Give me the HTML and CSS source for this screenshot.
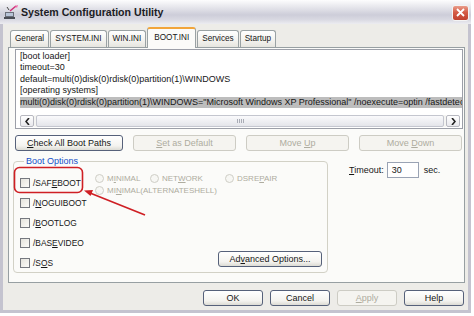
FILE: index.html
```html
<!DOCTYPE html>
<html lang="en">
<head>
  <meta charset="UTF-8">
  <title>System Configuration Utility</title>
  <link rel="stylesheet" href="styles.css">
</head>
<body>

<!-- Dialog window -->
<div class="window">
  <div class="titlebar">
    <svg class="app-icon" width="15" height="14" viewBox="0 0 15 14">
      <rect x="1" y="7" width="9" height="5" fill="#6b6f7a"/>
      <rect x="2" y="8" width="7" height="3" fill="#b8c4d8"/>
      <rect x="0" y="12" width="11" height="2" fill="#4a4d55"/>
      <path d="M6 6 L12 1" stroke="#d0307a" stroke-width="1.6"/>
      <path d="M11 1 L14 0 L13 3 Z" fill="#f06aa8"/>
      <path d="M3 2 L5 5" stroke="#444" stroke-width="1"/>
    </svg>
    <span class="title">System Configuration Utility</span>
    <div class="close">
      <svg width="11" height="11" viewBox="0 0 11 11">
        <path d="M2 2 L9 9 M9 2 L2 9" stroke="#fff" stroke-width="1.8"/>
      </svg>
    </div>
  </div>

  <div class="client">
    <!-- Tabs -->
    <div class="tabs">
      <div class="tab">General</div>
      <div class="tab">SYSTEM.INI</div>
      <div class="tab">WIN.INI</div>
      <div class="tab active">BOOT.INI</div>
      <div class="tab">Services</div>
      <div class="tab">Startup</div>
    </div>

    <div class="panel">
      <!-- boot.ini contents -->
      <div class="bootini">
        <div class="lines">
          <div class="line">[boot loader]</div>
          <div class="line">timeout=30</div>
          <div class="line">default=multi(0)disk(0)rdisk(0)partition(1)\WINDOWS</div>
          <div class="line">[operating systems]</div>
          <div class="line sel">multi(0)disk(0)rdisk(0)partition(1)\WINDOWS="Microsoft Windows XP Professional" /noexecute=optin /fastdetect</div>
        </div>
        <div class="hscroll">
          <div class="sb-btn">
            <svg width="5" height="7" viewBox="0 0 5 7"><path d="M4 0 L1 3.5 L4 7" fill="none" stroke="#222" stroke-width="1.6"/></svg>
          </div>
          <div class="sb-track">
            <div class="sb-thumb"><span class="grip"></span></div>
          </div>
          <div class="sb-btn">
            <svg width="5" height="7" viewBox="0 0 5 7"><path d="M1 0 L4 3.5 L1 7" fill="none" stroke="#222" stroke-width="1.6"/></svg>
          </div>
        </div>
      </div>

      <div class="btn-row">
        <div class="btn wide"><span><u>C</u>heck All Boot Paths</span></div>
        <div class="btn disabled"><span><u>S</u>et as Default</span></div>
        <div class="btn disabled"><span>Move <u>U</u>p</span></div>
        <div class="btn disabled"><span>Move <u>D</u>own</span></div>
      </div>

      <div class="options-row">
        <fieldset class="group">
          <legend>Boot Options</legend>
          <div class="checks">
            <div class="check"><span class="box"></span><span>/SAF<u>E</u>BOOT</span></div>
            <div class="check"><span class="box"></span><span>/<u>N</u>OGUIBOOT</span></div>
            <div class="check"><span class="box"></span><span>/<u>B</u>OOTLOG</span></div>
            <div class="check"><span class="box"></span><span>/BAS<u>E</u>VIDEO</span></div>
            <div class="check"><span class="box"></span><span>/S<u>O</u>S</span></div>
          </div>
          <div class="side">
            <div class="radios">
              <div class="radio-row">
                <div class="radio r1"><span class="dot"></span><span>M<u>I</u>NIMAL</span></div>
                <div class="radio r2"><span class="dot"></span><span>NET<u>W</u>ORK</span></div>
                <div class="radio"><span class="dot"></span><span>DSRE<u>P</u>AIR</span></div>
              </div>
              <div class="radio-row">
                <div class="radio"><span class="dot"></span><span>MI<u>N</u>IMAL(ALTERNATESHELL)</span></div>
              </div>
            </div>
            <div class="btn advanced"><span>Ad<u>v</u>anced Options...</span></div>
          </div>
        </fieldset>

        <div class="timeout">
          <span><u>T</u>imeout:</span>
          <div class="field">30</div>
          <span class="unit">sec.</span>
        </div>
      </div>
    </div>

    <!-- Dialog buttons -->
    <div class="dialog-buttons">
      <div class="btn"><span>OK</span></div>
      <div class="btn"><span>Cancel</span></div>
      <div class="btn disabled"><span><u>A</u>pply</span></div>
      <div class="btn"><span>Help</span></div>
    </div>
  </div>

  <!-- Red annotation drawn over the dialog -->
  <svg class="annotation" width="474" height="316" viewBox="0 0 474 316">
    <rect x="14.5" y="167.5" width="68" height="25" rx="5" fill="none" stroke="#cf1f24" stroke-width="1.6"/>
    <path d="M145 215 L90 193" stroke="#cf1f24" stroke-width="1.6"/>
    <path d="M84 190.5 L93 190 L90.5 196 Z" fill="#cf1f24"/>
  </svg>
</div>

</body>
</html>
```

FILE: styles.css
```css
body {
  margin: 0;
  background-color: #fff;
  font-family: "Liberation Sans", Arial, sans-serif;
  font-size: 9px;
  color: #161616;
}

u {
  text-decoration: underline;
  text-underline-offset: 1px;
}

.window {
  position: relative;
  width: 471px;
  height: 313px;
  box-sizing: border-box;
  background-color: #edece8;
  border: 3px solid #c4c3cf;
  border-top: none;
  display: flex;
  flex-direction: column;
}

/* Title bar */
.titlebar {
  height: 24px;
  margin: 0 -3px;
  display: flex;
  align-items: center;
  padding: 0 2px 0 4px;
  background: linear-gradient(#fdfdfe, #e6e6ec 30%, #cdcdd9 62%, #d9d9e2 82%, #ececf1);
}

.app-icon {
  flex: none;
}

.title {
  flex: 1;
  margin-left: 2px;
  font-weight: bold;
  font-size: 10.6px;
  color: #1c1c24;
}

.close {
  width: 15px;
  height: 14px;
  border: 1px solid #f4f4f4;
  border-radius: 3px;
  background: linear-gradient(#e99d8c, #d55c46 45%, #c0402e);
  display: flex;
  align-items: center;
  justify-content: center;
  margin-top: 1px;
}

.client {
  flex: 1;
  padding: 4px 3px 0 5px;
  display: flex;
  flex-direction: column;
}

/* Tabs */
.tabs {
  display: flex;
  align-items: flex-end;
  gap: 1px;
  margin-left: 2px;
  height: 19px;
  position: relative;
  z-index: 1;
}

.tab {
  height: 16px;
  line-height: 16px;
  padding: 0 4px;
  font-size: 8.2px;
  border: 1px solid #9aa2a4;
  border-bottom: none;
  border-radius: 3px 3px 0 0;
  background: linear-gradient(#ffffff, #f3f2ee 60%, #e6e5df);
}

.tab.active {
  height: 19px;
  line-height: 18px;
  margin-bottom: -1px;
  padding: 0 6px;
  border-top: 2px solid #f2a53a;
  background: #fbfbf9;
}

.panel {
  height: 236px;
  box-sizing: border-box;
  border: 1px solid #979fa2;
  background-color: #fbfbf9;
  padding: 1px 1px 0 6px;
}

/* boot.ini text box */
.bootini {
  height: 80px;
  box-sizing: border-box;
  border: 1px solid #9c9fa8;
  background-color: #fff;
  display: flex;
  flex-direction: column;
}

.lines {
  flex: 1;
  padding: 1px 0 0 4px;
  overflow: hidden;
}

.line {
  height: 11.4px;
  line-height: 11.4px;
  white-space: nowrap;
}

.line.sel {
  background-color: #bdbdbd;
}

.hscroll {
  height: 12px;
  margin-bottom: 1px;
  display: flex;
  padding: 0 2px 0 4px;
}

.sb-btn {
  width: 14px;
  box-sizing: border-box;
  border: 1px solid #b7b8c0;
  border-radius: 2px;
  background: linear-gradient(#fff, #e8e8ec);
  display: flex;
  align-items: center;
  justify-content: center;
}

.sb-track {
  flex: 1;
  background-color: #f4f4f2;
  padding: 0 2px 0 2px;
}

.sb-thumb {
  height: 100%;
  box-sizing: border-box;
  border: 1px solid #c4c6cf;
  border-radius: 2px;
  background: linear-gradient(#fafafc, #e4e5ea);
  display: flex;
  align-items: center;
  justify-content: center;
}

.grip {
  width: 7px;
  height: 4px;
  background: repeating-linear-gradient(90deg, #a9acb6 0 1px, transparent 1px 2px);
}

/* Buttons */
.btn {
  height: 16px;
  box-sizing: border-box;
  border: 1px solid #56617a;
  border-radius: 3px;
  background: linear-gradient(#ffffff, #f4f3ef 70%, #dcdbd4);
  display: flex;
  align-items: center;
  justify-content: center;
  white-space: nowrap;
}

.btn.disabled {
  border-color: #cdccc4;
  background: #f5f4f0;
  color: #aeac9f;
}

.btn-row {
  display: flex;
  gap: 10px;
  margin-top: 6px;
}

.btn-row .btn {
  width: 103px;
}

.btn-row .btn.wide {
  width: 108px;
}

/* Boot options */
.options-row {
  display: flex;
  margin-top: 5px;
}

.group {
  margin: 0 0 0 -2px;
  width: 315px;
  height: 117px;
  box-sizing: border-box;
  padding: 7px 5px 1px 6px;
  border: 1px solid #d2d1c6;
  border-radius: 4px;
  display: flex;
}

.group legend {
  padding: 0 2px;
  margin-left: 4px;
  color: #1550c8;
  line-height: 10px;
}

.checks {
  width: 75px;
  flex: none;
  font-size: 8.4px;
}

.check {
  height: 20px;
  display: flex;
  align-items: center;
}

.box {
  width: 10px;
  height: 10px;
  box-sizing: border-box;
  border: 1px solid #75787f;
  background: linear-gradient(135deg, #e4e3dc, #fbfbf9);
  margin-right: 3px;
}

.side {
  flex: 1;
  display: flex;
  flex-direction: column;
  justify-content: space-between;
  align-items: flex-end;
}

.radios {
  align-self: stretch;
  margin-top: -1px;
  color: #aeac9f;
  font-size: 8px;
}

.radio-row {
  display: flex;
  height: 12px;
}

.radio {
  display: flex;
  align-items: center;
}

.radio.r1 {
  width: 55px;
}

.radio.r2 {
  width: 75px;
}

.dot {
  width: 9px;
  height: 9px;
  box-sizing: border-box;
  border: 1px solid #cfcec6;
  border-radius: 50%;
  background-color: #f7f7f4;
  margin-right: 3px;
}

.btn.advanced {
  width: 104px;
  margin-bottom: 4px;
}

.timeout {
  margin-left: 21px;
  padding-top: 6px;
  display: flex;
  align-items: flex-start;
}

.timeout span {
  line-height: 16px;
}

.field {
  width: 32px;
  height: 16px;
  box-sizing: border-box;
  border: 1px solid #9aa3b4;
  background-color: #fff;
  margin-left: 3px;
  padding-left: 4px;
  line-height: 14px;
}

.timeout .unit {
  margin-left: 5px;
}

/* Dialog buttons */
.dialog-buttons {
  display: flex;
  justify-content: flex-end;
  gap: 7px;
  margin-top: 7px;
  margin-right: 1px;
}

.dialog-buttons .btn {
  width: 60px;
}

.annotation {
  position: absolute;
  top: 0;
  left: -3px;
  pointer-events: none;
}
```
